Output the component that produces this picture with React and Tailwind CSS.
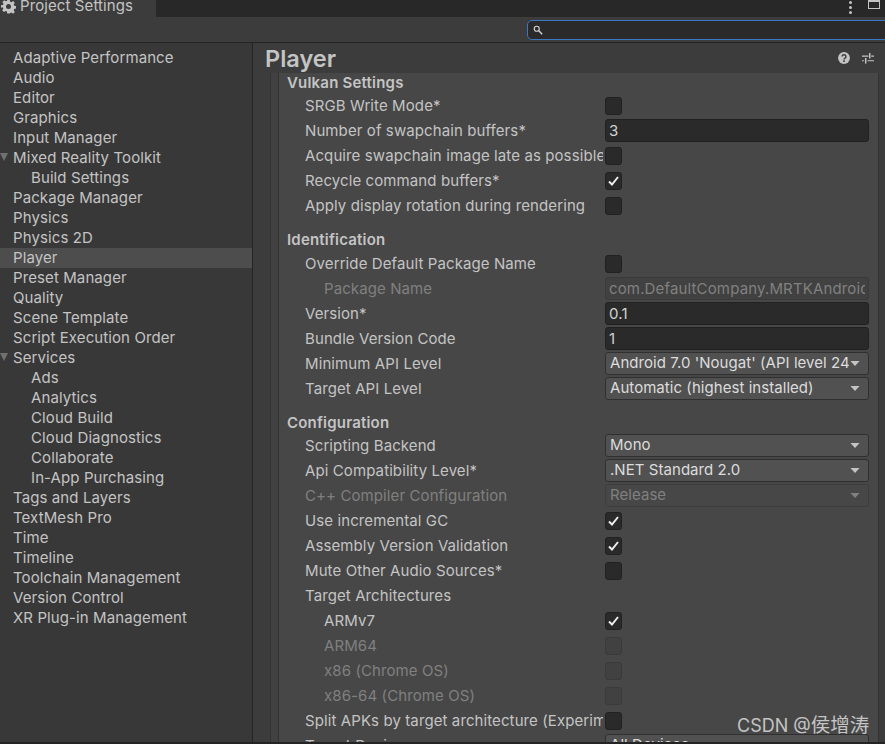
import React from "react";

const font = { fontFamily: "Inter, 'Noto Sans CJK SC', sans-serif" };

const side = [
  ["Adaptive Performance"], ["Audio"], ["Editor"], ["Graphics"], ["Input Manager"],
  ["Mixed Reality Toolkit", 0, 1], ["Build Settings", 1], ["Package Manager"], ["Physics"], ["Physics 2D"],
  ["Player", 0, 0, 1], ["Preset Manager"], ["Quality"], ["Scene Template"], ["Script Execution Order"],
  ["Services", 0, 1], ["Ads", 1], ["Analytics", 1], ["Cloud Build", 1], ["Cloud Diagnostics", 1],
  ["Collaborate", 1], ["In-App Purchasing", 1], ["Tags and Layers"], ["TextMesh Pro"], ["Time"], ["Timeline"],
  ["Toolchain Management"], ["Version Control"], ["XR Plug-in Management"],
];

function Check({ on, off }) {
  return (
    <div className={`w-[17px] h-[18px] rounded-[3px] border flex items-center justify-center ${off ? "bg-[#414141] border-[#3a3a3a]" : "bg-[#2a2a2a] border-[#212121]"}`}>
      {on ? (
        <svg width="13" height="12" viewBox="0 0 13 12">
          <path d="M2 6.5 L5 9.5 L11 2" fill="none" stroke="#eeeeee" strokeWidth="2" />
        </svg>
      ) : null}
    </div>
  );
}

function Input({ v, off }) {
  return (
    <div className={`w-[264px] h-[23px] rounded-[3px] border px-[3px] pt-[1px] flex items-center overflow-hidden whitespace-nowrap text-[15px] tracking-[0.15px] ${off ? "bg-[#414141] border-[#3a3a3a] text-[#808080]" : "bg-[#2a2a2a] border-[#212121] text-[#d2d2d2]"}`}>
      <span className="overflow-hidden">{v}</span>
    </div>
  );
}

function Select({ v, off }) {
  return (
    <div className={`w-[264px] h-[23px] rounded-[3px] border pl-[4px] pr-[8px] flex items-center justify-between whitespace-nowrap text-[15px] tracking-[0.05px] ${off ? "bg-[#474747] border-[#3e3e3e] text-[#808080]" : "bg-[#515151] border-[#303030] text-[#dcdcdc]"}`}>
      <span className="overflow-hidden w-[239px]">{v}</span>
      <svg width="10" height="5" viewBox="0 0 11 6"><path d="M0 0 H11 L5.5 6 Z" fill={off ? "#808080" : "#c4c4c4"} /></svg>
    </div>
  );
}

function Row({ label, sub, off, children }) {
  return (
    <div className="h-[25px] flex items-center">
      <div className={`w-[298px] mr-[2px] shrink-0 overflow-hidden whitespace-nowrap text-[15px] tracking-[0.1px] pt-[2px] ${sub ? "pl-[19px]" : ""} ${off ? "text-[#808080]" : "text-[#c4c4c4]"}`}>
        {label}
      </div>
      {children}
    </div>
  );
}

function Head({ children, className }) {
  return <div className={`flex items-center font-semibold text-[15px] tracking-[0.2px] text-[#c4c4c4] -ml-[18px] ${className}`}>{children}</div>;
}

export default function App() {
  return (
    <div style={font} className="relative w-[885px] h-[744px] overflow-hidden bg-[#383838] flex flex-col">
      {/* tab strip */}
      <div className="h-[17px] shrink-0 bg-[#282828] flex items-start">
        <div className="w-[156px] h-[17px] bg-[#3c3c3c] overflow-hidden flex items-center pl-[1px] gap-[4px] text-[#c4c4c4] text-[15px] tracking-[0.1px]">
          <svg width="15" height="15" viewBox="0 0 24 24" className="shrink-0 -mt-[4px]">
            <path fill="#c4c4c4" fillRule="evenodd" d="M10 1h4l.6 3.2 2 .8 2.7-1.8 2.8 2.8-1.8 2.7.8 2 3.2.6v4l-3.2.6-.8 2 1.8 2.7-2.8 2.8-2.7-1.8-2 .8L14 23h-4l-.6-3.2-2-.8-2.7 1.8-2.8-2.8 1.8-2.7-.8-2L0 14v-4l3.2-.6.8-2L2.2 4.7 5 1.9l2.7 1.8 2-.8zM12 8a4 4 0 1 0 0 8 4 4 0 0 0 0-8z" />
          </svg>
          <span className="-mt-[5px]">Project Settings</span>
        </div>
        <div className="ml-auto mr-[5px] flex items-start gap-[16px]">
          <div className="flex flex-col gap-[2px] pt-[1px]">
            <div className="w-[3px] h-[3px] rounded-full bg-[#c4c4c4]" />
            <div className="w-[3px] h-[3px] rounded-full bg-[#c4c4c4]" />
            <div className="w-[3px] h-[3px] rounded-full bg-[#c4c4c4]" />
          </div>
          <div className="w-[12px] h-[10px] border border-[#c4c4c4] border-t-[3px] -mt-[1px]" />
        </div>
      </div>
      {/* search bar */}
      <div className="h-[26px] shrink-0 bg-[#3c3c3c] border-b border-[#242424] flex items-start pl-[527px] pt-[3px]">
        <div className="w-[370px] h-[20px] shrink-0 bg-[#2a2a2a] border border-[#3a78c2] rounded-l-[5px] flex items-center pl-[5px]">
          <svg width="10" height="10" viewBox="0 0 12 12">
            <circle cx="4.5" cy="4.5" r="3" fill="none" stroke="#d0d0d0" strokeWidth="1.4" />
            <path d="M7 7 L11 11" stroke="#d0d0d0" strokeWidth="1.8" />
          </svg>
        </div>
      </div>
      <div className="flex-1 flex min-h-0">
        {/* sidebar */}
        <div className="w-[253px] shrink-0 border-r border-[#242424] pt-[5px]">
          {side.map(([t, ind, arrow, sel]) => (
            <div key={t} className={`relative h-[20px] flex items-center text-[15px] tracking-[0.1px] text-[#c4c4c4] ${ind ? "pl-[31px]" : "pl-[13px]"} ${sel ? "bg-[#4d4d4d]" : ""}`}>
              {arrow ? (
                <svg width="9" height="9" viewBox="0 0 9 9" className="absolute left-0 top-[5px]">
                  <path d="M0 0 H8 L4 8 Z" fill="#707070" />
                </svg>
              ) : null}
              {t}
            </div>
          ))}
        </div>
        {/* main */}
        <div className="flex-1 min-w-0 flex flex-col bg-[#3c3c3c]">
          <div className="h-[30px] shrink-0 flex items-center pl-[12px] pr-[11px] justify-between">
            <span className="font-semibold text-[23.5px] pt-[2px] text-[#c4c4c4]">Player</span>
            <div className="flex items-center gap-[12px]">
              <svg width="12" height="12" viewBox="0 0 13 13">
                <circle cx="6.5" cy="6.5" r="6.4" fill="#c4c4c4" />
                <path d="M4.4 5 A2.1 2 0 1 1 7.2 6.9 Q6.5 7.2 6.5 8" fill="none" stroke="#3c3c3c" strokeWidth="1.6" />
                <rect x="5.6" y="9" width="1.8" height="1.8" fill="#3c3c3c" />
              </svg>
              <svg width="12" height="12" viewBox="0 0 13 13">
                <path d="M0 4.5 H7 M10 4.5 H13 M0 9.5 H2 M6 9.5 H13" stroke="#c4c4c4" strokeWidth="1.2" />
                <rect x="7.6" y="1" width="1.6" height="6" fill="#c4c4c4" />
                <rect x="3.2" y="6.5" width="1.6" height="6" fill="#c4c4c4" />
              </svg>
            </div>
          </div>
          <div className="flex-1 min-h-0 flex pl-[17px] pr-[6px] overflow-hidden">
            <div className="w-[8px] shrink-0 bg-[#414141] border-l border-[#333333]" />
            <div className="flex-1 min-w-0 bg-[#474747] border-l border-r border-[#333333] pl-[26px] overflow-hidden">
              <Head className="h-[20px]">Vulkan Settings</Head>
              <Row label="SRGB Write Mode*"><Check /></Row>
              <Row label="Number of swapchain buffers*"><Input v="3" /></Row>
              <Row label="Acquire swapchain image late as possible*"><Check /></Row>
              <Row label="Recycle command buffers*"><Check on /></Row>
              <Row label="Apply display rotation during rendering"><Check /></Row>
              <Head className="h-[23px] mt-[10px] pt-[2px]">Identification</Head>
              <Row label="Override Default Package Name"><Check /></Row>
              <Row label="Package Name" sub off><Input v="com.DefaultCompany.MRTKAndroidDemo" off /></Row>
              <Row label="Version*"><Input v="0.1" /></Row>
              <Row label="Bundle Version Code"><Input v="1" /></Row>
              <Row label="Minimum API Level"><Select v="Android 7.0 'Nougat' (API level 24)" /></Row>
              <Row label="Target API Level"><Select v="Automatic (highest installed)" /></Row>
              <Head className="h-[21px] mt-[11px] pt-[2px]">Configuration</Head>
              <Row label="Scripting Backend"><Select v="Mono" /></Row>
              <Row label="Api Compatibility Level*"><Select v=".NET Standard 2.0" /></Row>
              <Row label="C++ Compiler Configuration" off><Select v="Release" off /></Row>
              <Row label="Use incremental GC"><Check on /></Row>
              <Row label="Assembly Version Validation"><Check on /></Row>
              <Row label="Mute Other Audio Sources*"><Check /></Row>
              <Row label="Target Architectures" />
              <Row label="ARMv7" sub><Check on /></Row>
              <Row label="ARM64" sub off><Check off /></Row>
              <Row label="x86 (Chrome OS)" sub off><Check off /></Row>
              <Row label="x86-64 (Chrome OS)" sub off><Check off /></Row>
              <Row label="Split APKs by target architecture (Experimental)"><Check /></Row>
              <Row label="Target Devices"><Select v="All Devices" /></Row>
            </div>
          </div>
        </div>
      </div>
      <div className="h-[2px] shrink-0 bg-[#242424]" />
      <div className="absolute left-[737px] top-[713px] text-[18px] leading-[24px] text-[#c4c4c4] whitespace-nowrap">
        CSDN @<span className="text-[19.5px]">侯增涛</span>
      </div>
    </div>
  );
}
